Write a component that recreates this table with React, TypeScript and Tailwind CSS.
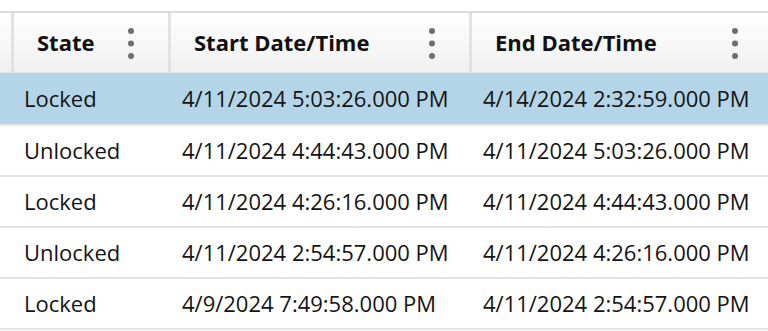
import React from 'react';

type Row = { state: string; start: string; end: string };

const rows: Row[] = [
  { state: 'Locked', start: '4/11/2024 5:03:26.000 PM', end: '4/14/2024 2:32:59.000 PM' },
  { state: 'Unlocked', start: '4/11/2024 4:44:43.000 PM', end: '4/11/2024 5:03:26.000 PM' },
  { state: 'Locked', start: '4/11/2024 4:26:16.000 PM', end: '4/11/2024 4:44:43.000 PM' },
  { state: 'Unlocked', start: '4/11/2024 2:54:57.000 PM', end: '4/11/2024 4:26:16.000 PM' },
  { state: 'Locked', start: '4/9/2024 7:49:58.000 PM', end: '4/11/2024 2:54:57.000 PM' },
];

const cols = 'grid grid-cols-[11px_157px_301px_303px]';

function MenuDots() {
  return (
    <svg width="8" height="32" viewBox="0 0 8 32" className="shrink-0">
      <circle cx="4" cy="4" r="3" fill="#6e6e6e" />
      <circle cx="4" cy="16.5" r="3" fill="#6e6e6e" />
      <circle cx="4" cy="29" r="3" fill="#6e6e6e" />
    </svg>
  );
}

function HeaderCell({ label }: { label: string }) {
  return (
    <div className="flex items-center justify-between border-l-[3px] border-[#e2e2e2] pl-[23px] pr-[33px]">
      <span className="text-[22px] font-bold text-[#111]">{label}</span>
      <MenuDots />
    </div>
  );
}

export default function App() {
  return (
    <div className="w-[768px] h-[331px] overflow-hidden bg-white font-['Open_Sans',sans-serif]">
      <div className="h-[11px]" />
      <div className="w-[772px] border-t-2 border-[#dcdcdc]">
        {/* header */}
        <div className={`${cols} h-[60px] bg-gradient-to-b from-white to-[#f0f0f0] border-b border-[#e4e4e4]`}>
          <div />
          <HeaderCell label="State" />
          <HeaderCell label="Start Date/Time" />
          <HeaderCell label="End Date/Time" />
        </div>

        {rows.map((r, i) => (
          <div
            key={i}
            className={`${cols} items-center border-b-2 border-[#e4e4e4] text-[22px] text-[#141414] ${
              i === 0 ? 'h-[53px] bg-[#b4d5e8]' : 'h-[51px] bg-white'
            }`}
          >
            <div />
            <div className="pl-[13px] whitespace-nowrap">{r.state}</div>
            <div className="pl-[14px] whitespace-nowrap">{r.start}</div>
            <div className="pl-[14px] whitespace-nowrap">{r.end}</div>
          </div>
        ))}
      </div>
    </div>
  );
}
